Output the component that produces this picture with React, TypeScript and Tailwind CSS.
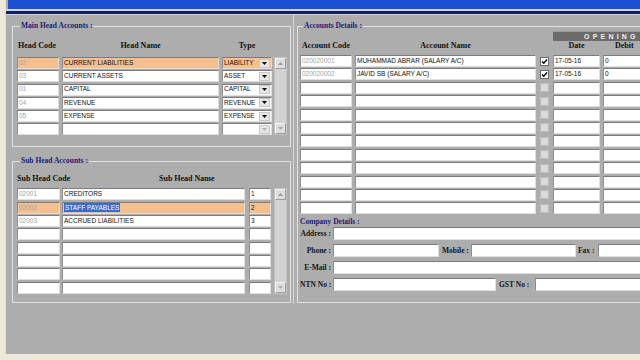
import React from 'react';

const SERIF = "font-['Liberation_Serif',serif]";
const SANS = "font-['Liberation_Sans',Arial,sans-serif]";

const cellBase =
  "h-full shrink-0 flex items-center overflow-hidden whitespace-nowrap border border-t-[#7b7b7b] border-l-[#8e8e8e] border-r-[#dedede] border-b-[#dedede] pl-px text-[6.5px] leading-none text-[#111] " +
  SANS;

const ORANGE = 'bg-[#f6c08e]';

function Cell({ className = '', active = false, children }: { className?: string; active?: boolean; children?: React.ReactNode }) {
  return <div className={`${cellBase} ${active ? ORANGE : 'bg-white'} ${className}`}>{children}</div>;
}

function Code({ children }: { children?: React.ReactNode }) {
  return <span className="text-[#a4a4a4]">{children}</span>;
}

function DownArrow({ color = '#000' }: { color?: string }) {
  return (
    <svg width="5" height="3" viewBox="0 0 5 3">
      <path d="M0 0h5L2.5 3z" fill={color} />
    </svg>
  );
}

function UpArrow({ color = '#9a9a9a' }: { color?: string }) {
  return (
    <svg width="5" height="3" viewBox="0 0 5 3">
      <path d="M0 3h5L2.5 0z" fill={color} />
    </svg>
  );
}

function ScrollBar({ className = '' }: { className?: string }) {
  const btn =
    'h-[11px] shrink-0 bg-[#dedede] border border-t-[#f4f4f4] border-l-[#f4f4f4] border-r-[#9c9c9c] border-b-[#9c9c9c] flex items-center justify-center';
  return (
    <div className={`w-[13px] shrink-0 flex flex-col bg-[#d2d2d2] border border-[#c2c2c2] ${className}`}>
      <div className={btn}>
        <UpArrow />
      </div>
      <div className="flex-1" />
      <div className={btn}>
        <DownArrow color="#a8a8a8" />
      </div>
    </div>
  );
}

function TypeCell({ value, active, disabled }: { value?: string; active?: boolean; disabled?: boolean }) {
  return (
    <Cell className="w-[50px] ml-[3px] justify-between pr-px" active={active}>
      <span>{value}</span>
      <div className="w-[11px] h-[9px] bg-[#e6e6e6] border border-[#c8c8c8] flex items-center justify-center">
        <DownArrow color={disabled ? '#b4b4b4' : '#000'} />
      </div>
    </Cell>
  );
}

function Checkbox({ checked }: { checked?: boolean }) {
  return checked ? (
    <div className="w-[9px] h-[9px] bg-white border border-[#6a6a6a] flex items-center justify-center">
      <svg width="7" height="7" viewBox="0 0 7 7">
        <path d="M1 3.5l1.8 1.8L6 1.5" stroke="#000" strokeWidth="1.4" fill="none" />
      </svg>
    </div>
  ) : (
    <div className="w-[9px] h-[9px] bg-[#d9d9d9] border border-[#bdbdbd]" />
  );
}

const mainRows = [
  { code: '02', name: 'CURRENT LIABILITIES', type: 'LIABILITY', active: true },
  { code: '03', name: 'CURRENT ASSETS', type: 'ASSET' },
  { code: '01', name: 'CAPITAL', type: 'CAPITAL' },
  { code: '04', name: 'REVENUE', type: 'REVENUE' },
  { code: '05', name: 'EXPENSE', type: 'EXPENSE' },
  { code: '', name: '', type: '' },
];

const subRows = [
  { code: '02001', name: 'CREDITORS', no: '1' },
  { code: '02002', name: 'STAFF PAYABLES', no: '2', active: true },
  { code: '02003', name: 'ACCRUED LIABILITIES', no: '3' },
  { code: '', name: '', no: '' },
  { code: '', name: '', no: '' },
  { code: '', name: '', no: '' },
  { code: '', name: '', no: '' },
  { code: '', name: '', no: '' },
];

const accRows = [
  { code: '020020001', name: 'MUHAMMAD ABRAR (SALARY A/C)', checked: true, date: '17-05-16', debit: '0' },
  { code: '020020002', name: 'JAVID SB (SALARY A/C)', checked: true, date: '17-05-16', debit: '0' },
  ...Array.from({ length: 10 }, () => ({ code: '', name: '', checked: false, date: '', debit: '' })),
];

const legendCls = `ml-[3px] px-px h-[10px] leading-[10px] text-[7.5px] font-bold text-[#1c1c78] ${SERIF}`;
const headCls = `h-[10px] leading-[10px] text-[8px] font-bold text-[#111] whitespace-nowrap ${SERIF}`;
const labelCls = `shrink-0 whitespace-nowrap text-[7.5px] font-bold text-[#161616] leading-[13px] ${SERIF}`;
const inputCls =
  'h-[13px] shrink-0 bg-white border border-t-[#7b7b7b] border-l-[#8e8e8e] border-r-[#e0e0e0] border-b-[#e0e0e0]';

export default function App() {
  return (
    <div className="w-[640px] h-[360px] bg-[#ece9d8] flex overflow-hidden">
      <div className="ml-[5px] w-[635px] h-[354px] flex flex-col bg-[#adadad] border-l border-[#dcdcdc]">
        {/* title strip */}
        <div className="h-[9px] ml-[2px] bg-[#1b4fd4] shrink-0" />
        <div className="h-[2px] bg-[#cbd3e6] shrink-0" />
        <div className="h-[3px] bg-[#13205c] shrink-0" />
        <div className="h-px bg-[#d6d6d6] shrink-0" />

        <div className="flex h-[289px] shrink-0">
          {/* left pane */}
          <div className="w-[288px] shrink-0 pl-[6px] pr-[2px] pt-[6px] border-r border-[#d8d8d8] flex flex-col">
            <fieldset className="border border-[#e2e2e2] pl-[4px] pb-[11px]">
              <legend className={legendCls}>Main Head Accounts :</legend>
              <div className={`mt-[10px] flex ${headCls}`}>
                <div className="w-[42px] pl-px">Head Code</div>
                <div className="w-[157px] ml-[3px] text-center">Head Name</div>
                <div className="w-[50px] ml-[3px] text-center">Type</div>
              </div>
              <div className="mt-[6px] flex">
                <div className="flex flex-col gap-[1.3px]">
                  {mainRows.map((r, i) => (
                    <div key={i} className="flex h-[12px]">
                      <Cell className="w-[42px]" active={r.active}>
                        <Code>{r.code}</Code>
                      </Cell>
                      <Cell className="w-[157px] ml-[3px]" active={r.active}>
                        {r.name}
                      </Cell>
                      <TypeCell value={r.type} active={r.active} disabled={!r.type} />
                    </div>
                  ))}
                </div>
                <ScrollBar className="ml-[2px]" />
              </div>
            </fieldset>

            <fieldset className="mt-[9px] border border-[#e2e2e2] pl-[4px] pb-[8px]">
              <legend className={legendCls}>Sub Head Accounts :</legend>
              <div className={`mt-[8px] flex ${headCls}`}>
                <div className="w-[142px]">Sub Head Code</div>
                <div>Sub Head Name</div>
              </div>
              <div className="mt-[4px] flex">
                <div className="flex flex-col gap-[1.3px]">
                  {subRows.map((r, i) => (
                    <div key={i} className="flex h-[12px]">
                      <Cell className="w-[43px]" active={r.active}>
                        <Code>{r.code}</Code>
                      </Cell>
                      <Cell className="w-[183px] ml-[2px]" active={r.active}>
                        {r.active ? (
                          <span className="bg-[#3a6cc9] text-white px-px leading-[9px]">{r.name}</span>
                        ) : (
                          r.name
                        )}
                      </Cell>
                      <Cell className="w-[22px] ml-[4px]" active={r.active}>
                        {r.no}
                      </Cell>
                    </div>
                  ))}
                </div>
                <ScrollBar className="ml-[3px]" />
              </div>
            </fieldset>
          </div>

          {/* right pane */}
          <div className="flex-1 pl-[3px] pt-[6px]">
            <fieldset className="w-[360px] h-[282px] border border-[#e2e2e2] pl-[2px]">
              <legend className={legendCls}>Accounts Details :</legend>
              <div className="flex h-[10px]">
                <div className="ml-[253px] w-[120px] h-[10px] bg-[#6b6b6b] border-t border-[#9a9a9a] pl-[31px] text-[7px] leading-[9px] font-bold tracking-[3.2px] text-[#efefef] whitespace-nowrap font-['Liberation_Sans',sans-serif]">
                  OPENING
                </div>
              </div>
              <div className={`flex ${headCls}`}>
                <div className="w-[52px] text-center">Account Code</div>
                <div className="w-[181px] ml-[3px] text-center">Account Name</div>
                <div className="w-[9px] ml-[4px]" />
                <div className="w-[47px] ml-[4px] text-center">Date</div>
                <div className="w-[50px] ml-[3px] pl-[12px]">Debit</div>
              </div>
              <div className="mt-[4px] flex flex-col gap-[1.4px]">
                {accRows.map((r, i) => (
                  <div key={i} className="flex h-[12px] items-center">
                    <Cell className="w-[52px]">
                      <Code>{r.code}</Code>
                    </Cell>
                    <Cell className="w-[181px] ml-[3px]">{r.name}</Cell>
                    <div className="w-[9px] ml-[4px] shrink-0">
                      <Checkbox checked={r.checked} />
                    </div>
                    <Cell className="w-[47px] ml-[4px]">{r.date}</Cell>
                    <Cell className="w-[50px] ml-[3px]">{r.debit}</Cell>
                  </div>
                ))}
              </div>

              {/* company details */}
              <div className={`mt-[3px] h-[10px] leading-[10px] text-[7.5px] font-bold text-[#1c1c78] ${SERIF}`}>
                Company Details :
              </div>
              <div className="flex flex-col gap-[4px]">
                <div className="flex items-center">
                  <div className={`${labelCls} w-[31px] text-right`}>Address :</div>
                  <div className={`${inputCls} ml-[2px] w-[320px]`} />
                </div>
                <div className="flex items-center">
                  <div className={`${labelCls} w-[31px] text-right`}>Phone :</div>
                  <div className={`${inputCls} ml-[2px] w-[106px]`} />
                  <div className={`${labelCls} ml-[3px] w-[29px]`}>Mobile :</div>
                  <div className={`${inputCls} w-[105px]`} />
                  <div className={`${labelCls} ml-[2px] w-[20px]`}>Fax :</div>
                  <div className={`${inputCls} w-[60px]`} />
                </div>
                <div className="flex items-center">
                  <div className={`${labelCls} w-[31px] text-right`}>E-Mail :</div>
                  <div className={`${inputCls} ml-[2px] w-[320px]`} />
                </div>
                <div className="flex items-center">
                  <div className={`${labelCls} w-[31px] text-right`}>NTN No :</div>
                  <div className={`${inputCls} ml-[2px] w-[163px]`} />
                  <div className={`${labelCls} ml-[3px] w-[36px]`}>GST No :</div>
                  <div className={`${inputCls} w-[120px]`} />
                </div>
              </div>
            </fieldset>
          </div>
        </div>
      </div>
    </div>
  );
}
